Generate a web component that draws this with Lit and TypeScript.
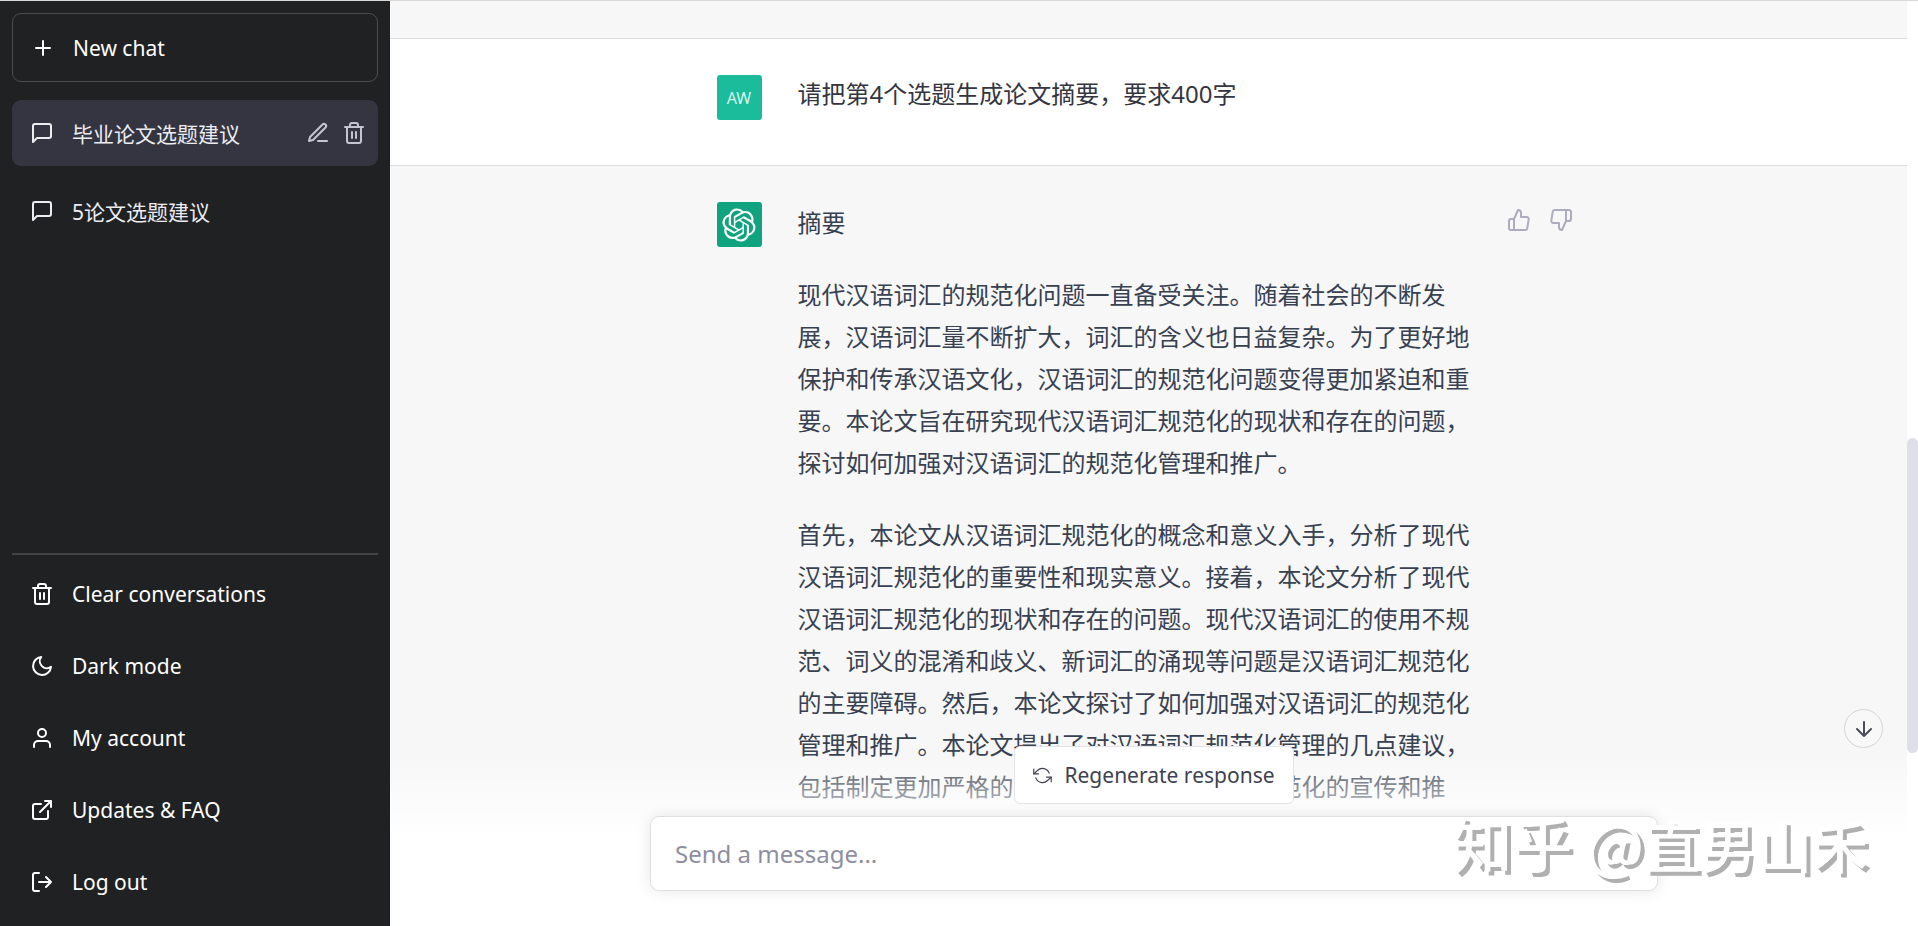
import { LitElement, html, css, svg } from "lit";
import { customElement, state } from "lit/decorators.js";

const stroke = (body: unknown, cls = "icon") => html`<svg
  class=${cls}
  viewBox="0 0 24 24"
  fill="none"
  stroke="currentColor"
  stroke-width="2"
  stroke-linecap="round"
  stroke-linejoin="round"
  aria-hidden="true"
>${body}</svg>`;

const icons = {
  plus: svg`<path d="M12 5v14M5 12h14"/>`,
  chat: svg`<path d="M21 15a2 2 0 0 1-2 2H7l-4 4V5a2 2 0 0 1 2-2h14a2 2 0 0 1 2 2z"/>`,
  edit: svg`<path d="M12 20h9"/><path d="M16.5 3.5a2.12 2.12 0 0 1 3 3L7 19l-4 1 1-4z"/>`,
  trash: svg`<path d="M3 6h18"/><path d="M19 6v14a2 2 0 0 1-2 2H7a2 2 0 0 1-2-2V6m3 0V4a2 2 0 0 1 2-2h4a2 2 0 0 1 2 2v2"/><path d="M10 11v6M14 11v6"/>`,
  moon: svg`<path d="M21 12.79A9 9 0 1 1 11.21 3 7 7 0 0 0 21 12.79z"/>`,
  user: svg`<path d="M20 21v-2a4 4 0 0 0-4-4H8a4 4 0 0 0-4 4v2"/><circle cx="12" cy="7" r="4"/>`,
  link: svg`<path d="M18 13v6a2 2 0 0 1-2 2H5a2 2 0 0 1-2-2V8a2 2 0 0 1 2-2h6"/><path d="M15 3h6v6M10 14L21 3"/>`,
  logout: svg`<path d="M9 21H5a2 2 0 0 1-2-2V5a2 2 0 0 1 2-2h4"/><path d="M16 17l5-5-5-5M21 12H9"/>`,
  up: svg`<path d="M14 9V5a3 3 0 0 0-3-3l-4 9v11h11.28a2 2 0 0 0 2-1.7l1.38-9a2 2 0 0 0-2-2.3zM7 22H4a2 2 0 0 1-2-2v-7a2 2 0 0 1 2-2h3"/>`,
  down: svg`<path d="M10 15v4a3 3 0 0 0 3 3l4-9V2H5.72a2 2 0 0 0-2 1.7l-1.38 9a2 2 0 0 0 2 2.3zm7-13h2.67A2.31 2.31 0 0 1 22 4v7a2.31 2.31 0 0 1-2.33 2H17"/>`,
  arrow: svg`<path d="M12 5v14M19 12l-7 7-7-7"/>`,
  refresh: svg`<path d="M1 4v6h6M23 20v-6h-6"/><path d="M20.49 9A9 9 0 0 0 5.64 5.64L1 10m22 4l-4.64 4.36A9 9 0 0 1 3.51 15"/>`,
};

const knot = html`<svg class="knot" viewBox="0 0 41 41" fill="currentColor" aria-hidden="true">
  <path d="M37.532 16.87a9.963 9.963 0 0 0-.856-8.184 10.078 10.078 0 0 0-10.855-4.835A9.964 9.964 0 0 0 18.306.5a10.079 10.079 0 0 0-9.614 6.977 9.967 9.967 0 0 0-6.664 4.834 10.08 10.08 0 0 0 1.24 11.817 9.965 9.965 0 0 0 .856 8.185 10.079 10.079 0 0 0 10.855 4.835 9.965 9.965 0 0 0 7.516 3.35 10.078 10.078 0 0 0 9.617-6.981 9.967 9.967 0 0 0 6.663-4.834 10.079 10.079 0 0 0-1.243-11.813zM22.498 37.886a7.474 7.474 0 0 1-4.799-1.735c.061-.033.168-.091.237-.134l7.964-4.6a1.294 1.294 0 0 0 .655-1.134V19.054l3.366 1.944a.12.12 0 0 1 .066.092v9.299a7.505 7.505 0 0 1-7.49 7.496zM6.392 31.006a7.471 7.471 0 0 1-.894-5.023c.06.036.162.099.237.141l7.964 4.6a1.297 1.297 0 0 0 1.308 0l9.724-5.614v3.888a.12.12 0 0 1-.048.103l-8.051 4.649a7.504 7.504 0 0 1-10.24-2.744zM4.297 13.62A7.469 7.469 0 0 1 8.2 10.333c0 .068-.004.19-.004.274v9.201a1.294 1.294 0 0 0 .654 1.132l9.723 5.614-3.366 1.944a.12.12 0 0 1-.114.01L7.04 23.856a7.504 7.504 0 0 1-2.743-10.237zm27.658 6.437l-9.724-5.615 3.367-1.943a.121.121 0 0 1 .113-.01l8.052 4.648a7.498 7.498 0 0 1-1.158 13.528v-9.476a1.293 1.293 0 0 0-.65-1.132zm3.35-5.043c-.059-.037-.162-.099-.236-.141l-7.965-4.6a1.298 1.298 0 0 0-1.308 0l-9.723 5.614v-3.888a.12.12 0 0 1 .048-.103l8.05-4.645a7.497 7.497 0 0 1 11.135 7.763zm-21.063 6.929l-3.367-1.944a.12.12 0 0 1-.065-.092v-9.299a7.497 7.497 0 0 1 12.293-5.756 6.94 6.94 0 0 0-.236.134l-7.965 4.6a1.294 1.294 0 0 0-.654 1.132l-.006 11.225zm1.829-3.943l4.33-2.501 4.332 2.5v5l-4.331 2.5-4.331-2.5V18z"/>
</svg>`;

@customElement("app-root")
class AppRoot extends LitElement {
  @state() private active = 0;

  private chats = ["毕业论文选题建议", "5论文选题建议"];

  private menu = [
    { label: "Clear conversations", icon: icons.trash },
    { label: "Dark mode", icon: icons.moon },
    { label: "My account", icon: icons.user },
    { label: "Updates & FAQ", icon: icons.link },
    { label: "Log out", icon: icons.logout },
  ];

  private answer = [
    "摘要",
    "现代汉语词汇的规范化问题一直备受关注。随着社会的不断发展，汉语词汇量不断扩大，词汇的含义也日益复杂。为了更好地保护和传承汉语文化，汉语词汇的规范化问题变得更加紧迫和重要。本论文旨在研究现代汉语词汇规范化的现状和存在的问题，探讨如何加强对汉语词汇的规范化管理和推广。",
    "首先，本论文从汉语词汇规范化的概念和意义入手，分析了现代汉语词汇规范化的重要性和现实意义。接着，本论文分析了现代汉语词汇规范化的现状和存在的问题。现代汉语词汇的使用不规范、词义的混淆和歧义、新词汇的涌现等问题是汉语词汇规范化的主要障碍。然后，本论文探讨了如何加强对汉语词汇的规范化管理和推广。本论文提出了对汉语词汇规范化管理的几点建议，包括制定更加严格的规范、加强对汉语词汇规范化的宣传和推",
  ];

  static styles = css`
    :host {
      display: flex;
      height: 100vh;
      box-sizing: border-box;
      border-top: 1px solid #d9d9d9;
      overflow: hidden;
      font-family: "Noto Sans", "Noto Sans CJK SC", sans-serif;
      font-size: 21px;
      color: #343541;
      background: #fff;
    }
    * { box-sizing: border-box; }
    button, textarea, input { font: inherit; color: inherit; }
    button { border: 0; padding: 0; background: none; cursor: pointer; text-align: left; }
    p { margin: 0; }
    .icon { width: 24px; height: 24px; flex: none; display: block; }

    .sidebar {
      flex: none;
      width: 390px;
      padding: 12px;
      display: flex;
      flex-direction: column;
      background: #202123;
      color: #fff;
    }
    .new {
      display: flex;
      align-items: center;
      gap: 18px;
      height: 69px;
      padding: 0 18px;
      border: 1px solid #4d4d4f;
      border-radius: 9px;
    }
    .chats { flex: 1; display: flex; flex-direction: column; gap: 12px; padding-top: 18px; }
    .chat {
      display: flex;
      align-items: center;
      height: 66px;
      padding: 0 12px 0 18px;
      border-radius: 9px;
      color: #ececf1;
    }
    .chat.on { background: #343541; }
    .name { flex: 1; display: flex; align-items: center; gap: 18px; height: 100%; }
    .tools { display: flex; gap: 12px; color: #c5c5d2; }
    .menu { border-top: 2px solid #444546; padding-top: 3px; margin-bottom: -4px; }
    .menu button { display: flex; align-items: center; gap: 18px; width: 100%; height: 72px; padding: 0 18px; }

    .main { flex: 1; min-width: 0; position: relative; overflow: hidden; }
    .thread { margin-right: 11px; }
    .row { border-bottom: 1px solid #dcdcde; }
    .previous { height: 38px; background: #f7f7f8; }
    .reply { background: #f7f7f8; }
    .inner {
      max-width: 912px;
      min-height: 126px;
      margin: 0 auto;
      padding: 36px 24px;
      display: flex;
      gap: 36px;
    }
    .avatar {
      flex: none;
      width: 45px;
      height: 45px;
      border-radius: 3px;
      display: flex;
      align-items: center;
      justify-content: center;
      background: #1abc9c;
      color: #d9f5ee;
      font-size: 16px;
    }
    .avatar.bot { background: #10a37f; color: #fff; }
    .knot { width: 34px; height: 34px; }
    .text {
      flex: 1;
      display: flex;
      flex-direction: column;
      gap: 30px;
      font-size: 24px;
      line-height: 38px;
      color: #343541;
    }
    .reply .text { line-height: 42px; color: #374151; }
    .votes { flex: none; width: 75px; display: flex; gap: 18px; padding-left: 1px; padding-top: 6px; color: #acacbe; align-items: flex-start; }

    .dock {
      position: absolute;
      inset: auto 0 0 0;
      padding: 0 24px 35px;
      display: flex;
      flex-direction: column;
      align-items: center;
      gap: 12px;
    }
    .fade {
      position: absolute;
      inset: auto 11px 0 0;
      height: 172px;
      background: linear-gradient(to bottom, rgba(255,255,255,0), #fff 48%);
    }
    .regen {
      position: relative;
      height: 58px;
      padding: 0 18px;
      display: flex;
      align-items: center;
      gap: 12px;
      border: 1px solid #e3e3e8;
      border-radius: 6px;
      background: #fff;
      color: #40414f;
    }
    .regen .icon { width: 19px; height: 19px; stroke-width: 1.5; }
    .composer {
      position: relative;
      width: 100%;
      max-width: 1008px;
      height: 75px;
      display: flex;
      border: 1px solid #e0e0e3;
      border-radius: 9px;
      background: #fff;
      box-shadow: 0 0 15px rgba(0, 0, 0, 0.1);
    }
    .composer input {
      flex: 1;
      border: 0;
      outline: 0;
      background: none;
      padding: 0 24px;
      font-size: 24px;
    }
    .composer input::placeholder { color: #8e8ea0; opacity: 1; }
    .jump {
      position: absolute;
      right: 35px;
      bottom: 178px;
      width: 39px;
      height: 39px;
      display: flex;
      align-items: center;
      justify-content: center;
      border: 1px solid #d5d5d9;
      border-radius: 50%;
      background: #f8f8f9;
      color: #4b4c58;
    }
    .thumb {
      position: absolute;
      right: 0;
      top: 47.2%;
      width: 11px;
      height: 34.1%;
      border-radius: 6px;
      background: #dfdfea;
    }
    .mark {
      position: absolute;
      right: 50px;
      bottom: 42px;
      font-family: "Noto Sans CJK SC", sans-serif;
      font-size: 56px;
      font-weight: 500;
      line-height: 80px;
      color: #fff;
      text-shadow: 4px 4px 0 #b0b0b0;
      pointer-events: none;
    }
    .site { font-size: 60px; }
  `;

  render() {
    return html`
      <nav class="sidebar" aria-label="Chats">
        <button class="new">${stroke(icons.plus)}New chat</button>
        <div class="chats">
          ${this.chats.map(
            (name, i) => html`<div class="chat ${i === this.active ? "on" : ""}">
              <button class="name" @click=${() => (this.active = i)}>${stroke(icons.chat)}${name}</button>
              ${i === this.active
                ? html`<div class="tools">
                    <button aria-label="Rename">${stroke(icons.edit)}</button>
                    <button aria-label="Delete">${stroke(icons.trash)}</button>
                  </div>`
                : ""}
            </div>`
          )}
        </div>
        <div class="menu">
          ${this.menu.map((m) => html`<button>${stroke(m.icon)}${m.label}</button>`)}
        </div>
      </nav>
      <main class="main">
        <div class="thread">
          <div class="row previous"></div>
          <section class="row">
            <div class="inner">
              <div class="avatar">AW</div>
              <div class="text"><p>请把第4个选题生成论文摘要，要求400字</p></div>
            </div>
          </section>
          <section class="row reply">
            <div class="inner">
              <div class="avatar bot">${knot}</div>
              <div class="text">${this.answer.map((p) => html`<p>${p}</p>`)}</div>
              <div class="votes">
                <button aria-label="Good response">${stroke(icons.up)}</button>
                <button aria-label="Bad response">${stroke(icons.down)}</button>
              </div>
            </div>
          </section>
        </div>
        <div class="dock">
          <div class="fade"></div>
          <button class="regen">${stroke(icons.refresh)}Regenerate response</button>
          <form class="composer" @submit=${(e: Event) => e.preventDefault()}>
            <input type="text" aria-label="Message" placeholder="Send a message..." />
          </form>
        </div>
        <button class="jump" aria-label="Scroll to bottom">${stroke(icons.arrow)}</button>
        <div class="thumb"></div>
        <div class="mark"><span class="site">知乎 @</span>直男山禾</div>
      </main>
    `;
  }
}
